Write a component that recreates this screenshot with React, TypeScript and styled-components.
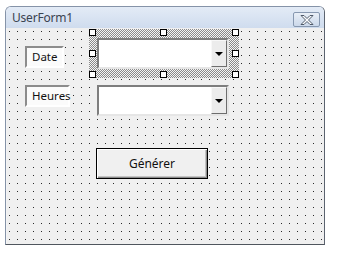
import styled, { createGlobalStyle } from 'styled-components'

const GlobalStyle = createGlobalStyle`
    body {
        margin: 0;
        background: #ffffff;
        font-family: "Noto Sans", "Open Sans", sans-serif;
    }
`;

const Window = styled.div`
    margin: 6px 0 0 5px;
    width: 320px;
    height: 239px;
    box-sizing: border-box;
    border: 1px solid #8593a8;
    border-right-color: #5c6470;
    border-bottom-color: #50565e;
    border-radius: 6px 6px 0 0;
    display: flex;
    flex-direction: column;
    overflow: hidden;
`;

const TitleBar = styled.div`
    height: 21px;
    flex: none;
    display: flex;
    align-items: center;
    justify-content: space-between;
    padding: 0 4px 0 6px;
    background: linear-gradient(#e3ebf6, #cfdcee);
`;

const Title = styled.span`
    font-size: 12px;
    color: #3a4350;
    letter-spacing: -0.2px;
`;

const CloseButton = styled.div`
    width: 27px;
    height: 15px;
    box-sizing: border-box;
    margin-top: 4px;
    border: 1px solid #8798b0;
    border-radius: 2px;
    background: linear-gradient(#e9eff7, #cbd8ea);
    display: flex;
    align-items: center;
    justify-content: center;
`;

const Canvas = styled.div`
    flex: 1;
    border-left: 1px solid #f4f4f4;
    background-color: #f0f0f0;
    background-image: conic-gradient(at 1px 1px, transparent 75%, #2a2a2a 0);
    background-size: 8px 8px;
    background-position: 2px 3px;
    display: grid;
    grid-template-columns: 72px 1fr;
    grid-auto-rows: min-content;
    padding: 1px 0 0 18px;
`;

const Label = styled.div<{ $w: number; $top: number }>`
    width: ${(p) => p.$w}px;
    height: 22px;
    margin-top: ${(p) => p.$top}px;
    box-sizing: border-box;
    border: 2px solid;
    border-color: #8c8c8c #ffffff #ffffff #8c8c8c;
    background: #fbfbfb;
    font-size: 11.5px;
    color: #111;
    line-height: 18px;
    padding-left: 5px;
    white-space: nowrap;
`;

const Selection = styled.div`
    position: relative;
    margin-left: -8px;
    width: 150px;
    padding: 9px 10px 9px 8px;
    box-sizing: border-box;
    background: repeating-conic-gradient(#8a8a8a 0 25%, #f4f4f4 0 50%) 0 0 / 2px 2px;
`;

const Handle = styled.span<{ $x: string; $y: string }>`
    position: absolute;
    width: 7px;
    height: 7px;
    box-sizing: border-box;
    border: 1px solid #000;
    background: #fff;
    left: ${(p) => p.$x};
    top: ${(p) => p.$y};
`;

const Combo = styled.div<{ $top?: number }>`
    width: 132px;
    height: 31px;
    margin-top: ${(p) => p.$top ?? 0}px;
    box-sizing: border-box;
    border: 2px solid;
    border-color: #7e7e7e #e6e6e6 #e6e6e6 #7e7e7e;
    background: #fff;
    display: flex;
    justify-content: flex-end;
`;

const DropButton = styled.div`
    width: 16px;
    box-sizing: border-box;
    border: 1px solid;
    border-color: #f8f8f8 #6e6e6e #6e6e6e #f8f8f8;
    background: #ececec;
    display: flex;
    align-items: center;
    justify-content: center;
`;

const Arrow = styled.span`
    width: 0;
    height: 0;
    border-left: 4px solid transparent;
    border-right: 4px solid transparent;
    border-top: 4px solid #000;
`;

const Button = styled.div`
    grid-column: 2;
    margin: 32px 0 0 -1px;
    width: 112px;
    height: 31px;
    box-sizing: border-box;
    border: 1px solid #000;
    box-shadow: inset 1px 1px 0 #fff, inset -1px -1px 0 #8a8a8a, inset -2px -2px 0 #c4c4c4;
    background: #f0f0f0;
    display: flex;
    align-items: center;
    justify-content: center;
    font-size: 12px;
    color: #111;
`;

const DropDown = ({ top }: { top?: number }) => (
    <Combo $top={top}>
        <DropButton>
            <Arrow />
        </DropButton>
    </Combo>
)

const App = () => {
    return (
        <>
            <GlobalStyle />
            <Window>
                <TitleBar>
                    <Title>UserForm1</Title>
                    <CloseButton>
                        <svg width="14" height="10" viewBox="0 0 14 10">
                            <polygon
                                points="1,0.5 4,0.5 7,3.5 10,0.5 13,0.5 8.5,5 13,9.5 10,9.5 7,6.5 4,9.5 1,9.5 5.5,5"
                                fill="#fbfcfe"
                                stroke="#4f5a6a"
                                strokeWidth="1"
                            />
                        </svg>
                    </CloseButton>
                </TitleBar>
                <Canvas>
                    <Label $w={39} $top={17}>Date</Label>
                    <Selection>
                        <Handle $x="0" $y="0" />
                        <Handle $x="71px" $y="0" />
                        <Handle $x="143px" $y="0" />
                        <Handle $x="0" $y="21px" />
                        <Handle $x="143px" $y="21px" />
                        <Handle $x="0" $y="42px" />
                        <Handle $x="71px" $y="42px" />
                        <Handle $x="143px" $y="42px" />
                        <DropDown />
                    </Selection>
                    <Label $w={45} $top={7}>Heures</Label>
                    <DropDown top={7} />
                    <Button>Générer</Button>
                </Canvas>
            </Window>
        </>
    )
}

export default App
